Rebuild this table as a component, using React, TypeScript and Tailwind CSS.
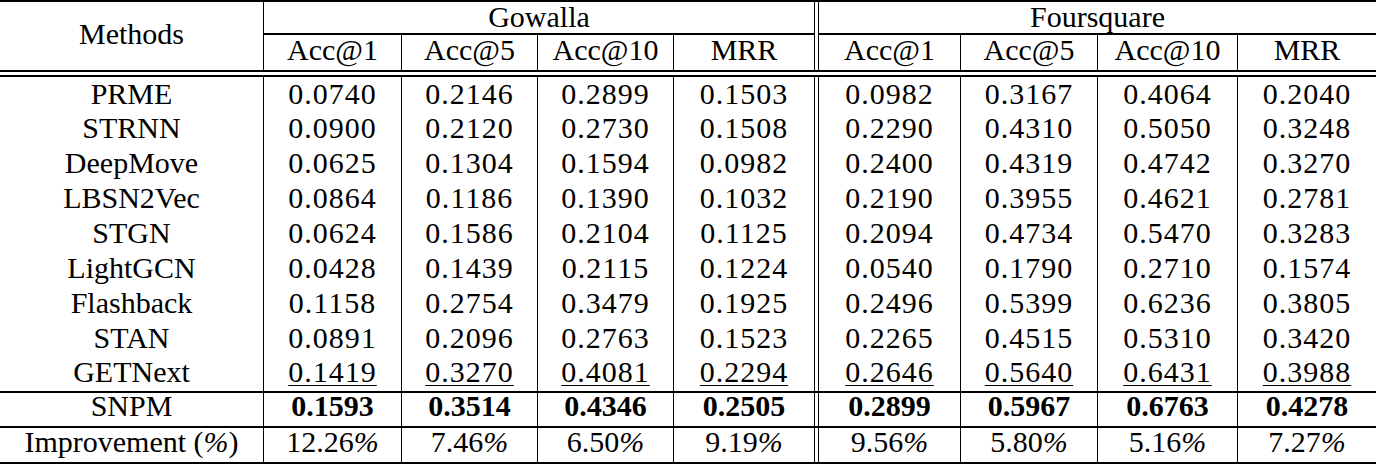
import React from 'react'

type Row = { name: string; gow: string[]; fsq: string[] }

const ROWS: Row[] = [
  { name: 'PRME', gow: ['0.0740', '0.2146', '0.2899', '0.1503'], fsq: ['0.0982', '0.3167', '0.4064', '0.2040'] },
  { name: 'STRNN', gow: ['0.0900', '0.2120', '0.2730', '0.1508'], fsq: ['0.2290', '0.4310', '0.5050', '0.3248'] },
  { name: 'DeepMove', gow: ['0.0625', '0.1304', '0.1594', '0.0982'], fsq: ['0.2400', '0.4319', '0.4742', '0.3270'] },
  { name: 'LBSN2Vec', gow: ['0.0864', '0.1186', '0.1390', '0.1032'], fsq: ['0.2190', '0.3955', '0.4621', '0.2781'] },
  { name: 'STGN', gow: ['0.0624', '0.1586', '0.2104', '0.1125'], fsq: ['0.2094', '0.4734', '0.5470', '0.3283'] },
  { name: 'LightGCN', gow: ['0.0428', '0.1439', '0.2115', '0.1224'], fsq: ['0.0540', '0.1790', '0.2710', '0.1574'] },
  { name: 'Flashback', gow: ['0.1158', '0.2754', '0.3479', '0.1925'], fsq: ['0.2496', '0.5399', '0.6236', '0.3805'] },
  { name: 'STAN', gow: ['0.0891', '0.2096', '0.2763', '0.1523'], fsq: ['0.2265', '0.4515', '0.5310', '0.3420'] },
]

const SECOND: Row = { name: 'GETNext', gow: ['0.1419', '0.3270', '0.4081', '0.2294'], fsq: ['0.2646', '0.5640', '0.6431', '0.3988'] }
const OURS: Row = { name: 'SNPM', gow: ['0.1593', '0.3514', '0.4346', '0.2505'], fsq: ['0.2899', '0.5967', '0.6763', '0.4278'] }
const IMPROVE = { gow: ['12.26', '7.46', '6.50', '9.19'], fsq: ['9.56', '5.80', '5.16', '7.27'] }

const METRICS = ['Acc@1', 'Acc@5', 'Acc@10', 'MRR']

const cell = 'text-center whitespace-nowrap overflow-visible'

function Pct() {
  return <span className="italic">%</span>
}

// four cells of one dataset, ruled between them
function Group({ values, rowCls, render }: { values: string[]; rowCls: string; render: (v: string) => React.ReactNode }) {
  return (
    <>
      {values.map((v, i) => (
        <div key={i} className={`${cell} ${rowCls} ${i > 0 ? 'border-l border-black' : ''}`}>
          {render(v)}
        </div>
      ))}
    </>
  )
}

function Spacer({ rowCls }: { rowCls: string }) {
  return <div className={`border-x border-black ${rowCls}`} />
}

function DataRow({ row, rowCls, render }: { row: Row; rowCls: string; render: (v: string) => React.ReactNode }) {
  return (
    <>
      <div className={`${cell} ${rowCls} border-r border-black`}>{row.name}</div>
      <Group values={row.gow} rowCls={rowCls} render={render} />
      <Spacer rowCls={rowCls} />
      <Group values={row.fsq} rowCls={rowCls} render={render} />
    </>
  )
}

export default function App() {
  const plain = (v: string) => <span className="tracking-[1px]">{v}</span>

  return (
    <div className="w-[1376px] h-[467px] bg-white overflow-hidden text-black text-[30px] font-['Liberation_Serif',serif]">
      <div className="grid grid-cols-[264px_137px_136px_136px_141px_5px_141px_137px_140px_139px] grid-rows-[35px_35px_7px_35px_35px_35px_35px_35px_35px_35px_35px_36px_35px_36px]">
        {/* header */}
        <div className="row-span-2 flex items-center justify-center pb-1 leading-[32px] border-t-2 border-r border-black">
          Methods
        </div>
        <div className={`${cell} col-span-4 leading-[30px] border-y-2 border-black`}>Gowalla</div>
        <div className="row-span-2 border-t-2 border-x border-black" />
        <div className={`${cell} col-span-4 leading-[30px] border-y-2 border-black`}>Foursquare</div>
        {METRICS.map((m, i) => (
          <div key={'g' + m} className={`${cell} leading-[29px] ${i > 0 ? 'border-l border-black' : ''}`}>
            {m}
          </div>
        ))}
        {METRICS.map((m, i) => (
          <div key={'f' + m} className={`${cell} leading-[29px] ${i > 0 ? 'border-l border-black' : ''}`}>
            {m}
          </div>
        ))}
        <div className="col-span-10 border-y-2 border-black" />

        {/* baselines */}
        {ROWS.map((r, i) => (
          <DataRow key={r.name} row={r} rowCls={i === 0 ? 'leading-[33px]' : 'leading-[31px]'} render={plain} />
        ))}
        <DataRow
          row={SECOND}
          rowCls="leading-[30px] border-b-2 border-black"
          render={(v) => <span className="tracking-[1px] underline decoration-1 underline-offset-[3px]">{v}</span>}
        />

        {/* ours */}
        <DataRow row={OURS} rowCls="leading-[26px] border-b-2 border-black" render={(v) => <b className="font-bold">{v}</b>} />

        {/* improvement */}
        <div className={`${cell} leading-[28px] border-b-2 border-r border-black`}>
          Improvement (<Pct />)
        </div>
        <Group values={IMPROVE.gow} rowCls="leading-[28px] border-b-2 border-black" render={(v) => <>{v}<Pct /></>} />
        <Spacer rowCls="border-b-2" />
        <Group values={IMPROVE.fsq} rowCls="leading-[28px] border-b-2 border-black" render={(v) => <>{v}<Pct /></>} />
      </div>
    </div>
  )
}
